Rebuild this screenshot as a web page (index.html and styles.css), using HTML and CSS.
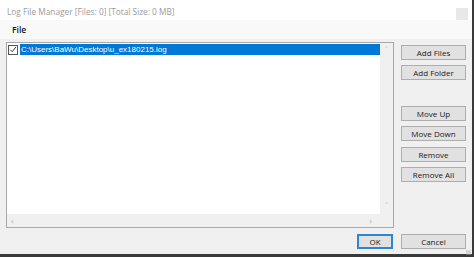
FILE: index.html
```html
<!DOCTYPE html>
<html>
<head>
<meta charset="utf-8">
<link rel="stylesheet" href="styles.css">
</head>
<body>
<div class="window">
  <div class="titlebar">
    <span class="title">Log File Manager [Files: 0] [Total Size: 0 MB]</span>
    <span class="close"></span>
  </div>
  <div class="menubar"><span class="menu-item">File</span></div>
  <div class="content">
    <div class="listbox">
      <div class="list-area">
        <div class="row">
          <span class="check">
            <svg width="9" height="9" viewBox="0 0 9 9"><path d="M1.5 4.8 L3.6 7 L7.8 1.6" fill="none" stroke="#333" stroke-width="1.1"/></svg>
          </span>
          <span class="row-text">C:\Users\BaWu\Desktop\u_ex180215.log</span>
        </div>
      </div>
      <div class="vscroll">
        <span class="arrow">&#x2C4;</span>
        <span class="arrow">&#x2C5;</span>
      </div>
      <div class="hscroll">
        <span class="arrow">&#x2039;</span>
        <span class="arrow">&#x203A;</span>
      </div>
      <div class="corner"></div>
    </div>
    <div class="side">
      <div class="group">
        <button class="btn">Add Files</button>
        <button class="btn">Add Folder</button>
      </div>
      <div class="group">
        <button class="btn">Move Up</button>
        <button class="btn">Move Down</button>
        <button class="btn btn-gap">Remove</button>
        <button class="btn">Remove All</button>
      </div>
    </div>
  </div>
  <div class="footer">
    <button class="btn btn-ok">OK</button>
    <button class="btn btn-cancel">Cancel</button>
    <span class="grip"></span>
  </div>
</div>
</body>
</html>
```
FILE: styles.css
```css
* { box-sizing: border-box; }
html, body { margin: 0; padding: 0; }
body {
  width: 474px;
  height: 257px;
  background: #3a3a3a;
  font-family: "Open Sans", "Noto Sans", sans-serif;
  overflow: hidden;
}
.window {
  width: 472px;
  height: 254px;
  background: #f0f0f0;
  display: flex;
  flex-direction: column;
}
.titlebar {
  height: 20px;
  background: #ffffff;
  display: flex;
  align-items: center;
  justify-content: space-between;
  padding: 3px 4px 0 7px;
}
.title {
  font-size: 8.3px;
  color: #9b9b9b;
}
.close {
  width: 12px;
  height: 12px;
  background: #e8e8e8;
  margin-top: 4px;
}
.menubar {
  height: 19px;
  background: #f9f9f9;
  display: flex;
  align-items: center;
  padding-left: 12px;
}
.menu-item {
  font-size: 8.6px;
  color: #111;
  font-weight: 600;
}
.content {
  display: flex;
  padding: 3px 0 0 6px;
}
.listbox {
  width: 388px;
  height: 186px;
  border: 1px solid #a9a9a9;
  display: grid;
  grid-template-columns: 1fr 13px;
  grid-template-rows: 1fr 13px;
  background: #fff;
}
.list-area {
  background: #fff;
  padding: 1px 0 0 1px;
}
.row {
  display: flex;
  align-items: center;
  height: 11px;
}
.check {
  width: 10px;
  height: 10px;
  border: 1px solid #555;
  background: #fff;
  display: flex;
  align-items: center;
  justify-content: center;
  margin-right: 2px;
}
.row-text {
  flex: 1;
  height: 11px;
  background: #0078d7;
  color: #fff;
  font-family: "Liberation Sans", Arial, sans-serif;
  font-size: 8px;
  line-height: 11px;
  padding-left: 1px;
}
.vscroll {
  background: #f0f0f0;
  display: flex;
  flex-direction: column;
  justify-content: space-between;
  align-items: center;
  padding: 2px 0 4px;
}
.hscroll {
  background: #f0f0f0;
  display: flex;
  justify-content: space-between;
  align-items: center;
  padding: 0 8px 0 4px;
}
.arrow {
  font-size: 9px;
  color: #b0b0b0;
  line-height: 9px;
}
.corner { background: #f0f0f0; }
.side {
  width: 65px;
  margin-left: 7px;
  padding-top: 3px;
  display: flex;
  flex-direction: column;
  gap: 26px;
}
.group {
  display: flex;
  flex-direction: column;
  gap: 5px;
}
.btn {
  width: 65px;
  height: 15px;
  border: 1px solid #adadad;
  background: #e1e1e1;
  font-family: "Open Sans", "Noto Sans", sans-serif;
  font-size: 8px;
  color: #1a1a1a;
  padding: 0;
  line-height: 12px;
  margin: 0;
}
.btn-gap { margin-top: 1px; }
.footer {
  display: flex;
  justify-content: flex-end;
  align-items: flex-start;
  gap: 8px;
  padding: 6px 6px 0 0;
  position: relative;
}
.btn-ok {
  width: 36px;
  border: 2px solid #2b86d8;
  line-height: 11px;
}
.btn-cancel { width: 65px; }
.grip {
  position: absolute;
  right: 1px;
  bottom: -6px;
  width: 5px;
  height: 5px;
  background: radial-gradient(circle, #b8b8b8 0.6px, transparent 0.8px) 0 0 / 2px 2px;
}
```
